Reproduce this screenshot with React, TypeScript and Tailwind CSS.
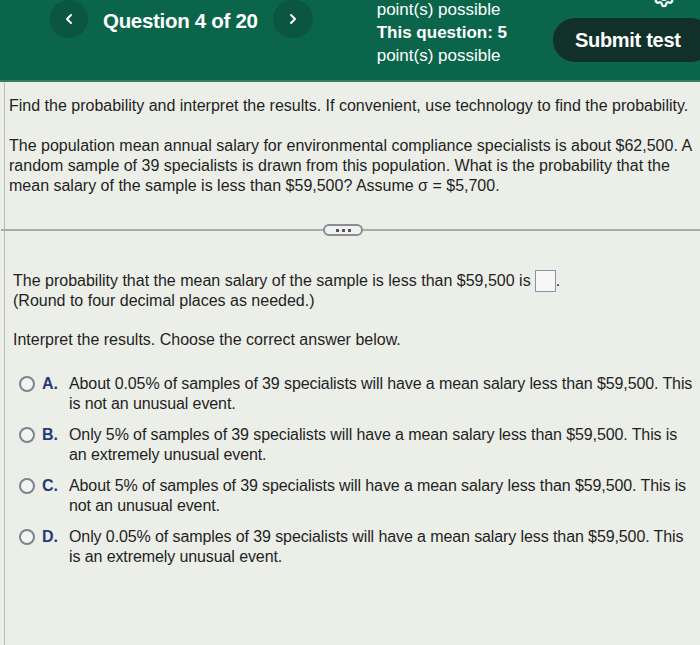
import { ChevronLeft, ChevronRight, Settings } from 'lucide-react';

const options = [
  { key: 'A', l1: 'About 0.05% of samples of 39 specialists will have a mean salary less than $59,500. This', l2: 'is not an unusual event.' },
  { key: 'B', l1: 'Only 5% of samples of 39 specialists will have a mean salary less than $59,500. This is', l2: 'an extremely unusual event.' },
  { key: 'C', l1: 'About 5% of samples of 39 specialists will have a mean salary less than $59,500. This is', l2: 'not an unusual event.' },
  { key: 'D', l1: 'Only 0.05% of samples of 39 specialists will have a mean salary less than $59,500. This', l2: 'is an extremely unusual event.' },
];

export default function App() {
  return (
    <div
      className="w-[700px] h-[645px] overflow-hidden bg-[#eceee8] text-[#1f1f1f]"
      style={{ fontFamily: '"Liberation Sans", Arial, sans-serif' }}
    >
      {/* header bar */}
      <div className="relative h-[82px] bg-[#0b654b] border-b-2 border-[#2f7d63] flex text-white">
        <div className="flex items-start pl-[50px]">
          <button className="w-[38px] h-[38px] rounded-full bg-[#0a5641] flex items-center justify-center">
            <ChevronLeft size={16} strokeWidth={3} />
          </button>
          <div className="ml-[15px] mt-[6px] text-[20.5px] font-bold tracking-[-0.3px]">Question 4 of 20</div>
          <button className="ml-[15px] w-[40px] h-[38px] rounded-full bg-[#0a5641] flex items-center justify-center">
            <ChevronRight size={16} strokeWidth={3} />
          </button>
        </div>
        <div className="ml-[64px] -mt-[2px] text-[17px] leading-[23px]">
          <div>point(s) possible</div>
          <div className="font-bold">This question: 5</div>
          <div>point(s) possible</div>
        </div>
        <button className="absolute left-[553px] top-[18px] w-[160px] h-[44px] rounded-full bg-[#12302a] text-left pl-[22px] text-[20px] font-bold tracking-[-0.3px]">
          Submit test
        </button>
        <Settings size={22} className="absolute left-[653px] -top-[14px] text-white" strokeWidth={2.5} />
      </div>

      <div className="border-l border-[#b9bcb6] ml-[4px] h-full">
        <div className="pl-[4px] text-[16px] leading-[20px] whitespace-nowrap">
          <p className="pt-[14px]">
            Find the probability and interpret the results. If convenient, use technology to find the probability.
          </p>
          <p className="mt-[20px]">
            The population mean annual salary for environmental compliance specialists is about $62,500. A
            <br />
            random sample of 39 specialists is drawn from this population. What is the probability that the
            <br />
            mean salary of the sample is less than $59,500? Assume σ = $5,700.
          </p>
        </div>

        {/* divider with pill */}
        <div className="relative mt-[28px] -ml-[4px] h-[12px] flex items-center">
          <div className="w-full h-[2px] bg-[#a9aca7]" />
          <div className="absolute left-[322px] top-0 w-[40px] h-[12px] rounded-full border-2 border-[#8a8d95] bg-[#f1f2f0] flex items-center justify-center gap-[3px]">
            <span className="w-[3px] h-[3px] bg-[#555]" />
            <span className="w-[3px] h-[3px] bg-[#555]" />
            <span className="w-[3px] h-[3px] bg-[#555]" />
          </div>
        </div>

        <div className="pl-[8px] text-[16px] leading-[20px]">
          <div className="mt-[35px] h-[20px] flex items-center">
            <span>The probability that the mean salary of the sample is less than $59,500 is</span>
            <span className="ml-[4px] inline-block w-[21px] h-[22px] border border-[#8c92a8] bg-[#f7f8f6]" />
            <span>.</span>
          </div>
          <p>(Round to four decimal places as needed.)</p>
          <p className="mt-[19px]">Interpret the results. Choose the correct answer below.</p>
        </div>

        <div className="mt-[24px] pl-[14px] flex flex-col gap-[11px] text-[16px] leading-[20px] tracking-[-0.1px] whitespace-nowrap">
          {options.map(o => (
            <div key={o.key} className="flex items-start">
              <span className="mt-[2px] w-[16px] h-[16px] rounded-full border-2 border-[#7e8291] bg-[#f3f4f2] shrink-0" />
              <span className="ml-[7px] w-[27px] font-bold text-[#24397a] shrink-0">{o.key}.</span>
              <span>
                {o.l1}
                <br />
                {o.l2}
              </span>
            </div>
          ))}
        </div>
      </div>
    </div>
  );
}
